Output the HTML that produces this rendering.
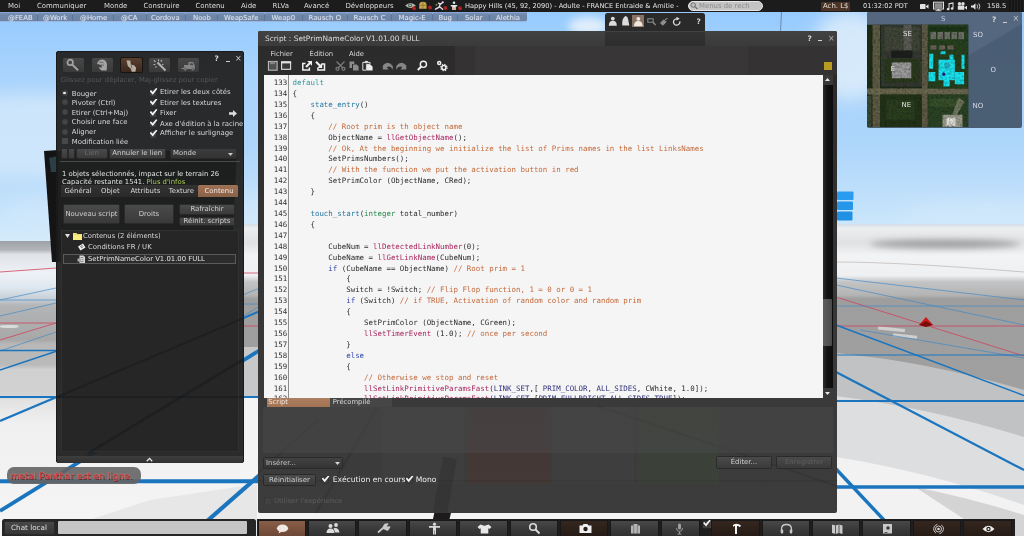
<!DOCTYPE html>
<html lang="fr">
<head>
<meta charset="utf-8">
<title>Script : SetPrimNameColor V1.01.00 FULL</title>
<style>
html,body{margin:0;padding:0;}
body{width:1024px;height:536px;overflow:hidden;position:relative;background:#c9dff5;
 font-family:"DejaVu Sans","Liberation Sans",sans-serif;font-size:6.9px;color:#d8d8d8;line-height:1;}
.abs{position:absolute;}
#world{position:absolute;left:0;top:0;width:1024px;height:536px;}
.t{position:absolute;white-space:nowrap;line-height:10px;height:10px;margin-top:-5px;}
/* top menu */
#menubar{position:absolute;left:0;top:0;width:1024px;height:12px;background:#1c1c1c;}
#menubar .t{color:#dcdcdc;font-size:6.95px;top:6px;}
#favbar{position:absolute;left:0;top:12px;width:526.500px;height:10px;background:linear-gradient(#7890b6,#6e86a8 30%,#6c84a6);border-top:0.800px solid #86a6d8;border-bottom:1px solid #9cb6de;box-sizing:border-box;border-radius:0 0 2px 0;}
#favbar .t{color:#d4dce8;font-size:6.9px;top:5px;text-shadow:0 0 1px #fff8;}
#favbar i{position:absolute;top:0.500px;width:1px;height:7.500px;background:#5e7494;box-shadow:0 -0.700px 0 #a8c0e4;}
/* generic floater */
.floater{position:absolute;background:rgba(36,36,36,0.95);border-radius:2px;box-sizing:border-box;}
.btn{position:absolute;box-sizing:border-box;background:linear-gradient(#4a4a4a,#3a3a3a);border:1px solid #2a2a2a;border-radius:1.5px;color:#d0d0d0;text-align:center;white-space:nowrap;}
.btn.dis{color:#6a6a6a;}

.tb{position:absolute;top:58px;width:21px;height:14px;background:linear-gradient(#484848,#3a3a3a);border-radius:1.5px;box-shadow:0 0 0 0.5px #2a2a2a;}
.tb.act{background:linear-gradient(#5a4030,#3a281e);box-shadow:0 0 0 1px #1a1410;}
.tb svg{position:absolute;left:0;top:0;}
.rad{position:absolute;width:6px;height:6px;border-radius:50%;background:radial-gradient(#4a4a4a,#383838);box-shadow:0 0 0 0.5px #2c2c2c;}
.rad.on::after{content:"";position:absolute;left:1.8px;top:1.8px;width:2.4px;height:2.4px;border-radius:50%;background:#f0f0f0;}
.cb{position:absolute;width:6px;height:6px;background:#484848;box-shadow:0 0 0 0.5px #2c2c2c;}
.ck{position:absolute;width:8px;height:8px;}
.ck::before{content:"";position:absolute;left:0.2px;top:1.6px;width:6.4px;height:6.4px;background:#3c3c3c;box-shadow:0 0 0 0.5px #2a2a2a;}
.ck::after{content:"";position:absolute;left:0;top:0;width:8px;height:7px;background:#f6f6f6;clip-path:polygon(3% 46%,19% 30%,38% 58%,82% 0%,99% 9%,41% 96%);}

#code{font-family:"DejaVu Sans Mono","Liberation Mono",monospace;font-size:7.435px;color:#2c2c2c;}
#code .ln{height:10.91px;line-height:10.91px;white-space:pre;position:relative;}
#code .ln b{position:absolute;left:0;width:23.2px;text-align:right;font-weight:normal;color:#303030;}
#code .ln .cd{position:absolute;left:28.6px;}

.bb{position:absolute;top:520px;height:16px;box-sizing:border-box;background:linear-gradient(#484848,#383838 60%,#303030);border:1px solid #181818;border-bottom:none;border-radius:1.5px 1.5px 0 0;overflow:hidden;}
.bb.act{background:linear-gradient(#8a5e48,#6e4836);}
.bb.dk{background:linear-gradient(#35271f,#261b16);}
#wrap{position:absolute;left:0;top:0;width:1024px;height:536px;overflow:hidden;filter:blur(0.35px);}
</style>
</head>
<body>
<div id="wrap">
<svg id="world" width="1024" height="536" viewBox="0 0 1024 536">
 <defs>
  <linearGradient id="sky" gradientUnits="userSpaceOnUse" x1="0" y1="0" x2="0" y2="245">
   <stop offset="0" stop-color="#94c8fe"/>
   <stop offset="0.12" stop-color="#9bcdfe"/>
   <stop offset="0.3" stop-color="#a8d3fc"/>
   <stop offset="0.6" stop-color="#aed6fb"/>
   <stop offset="0.85" stop-color="#c4e2fb"/>
   <stop offset="1" stop-color="#d6ecfb"/>
  </linearGradient>
  <linearGradient id="gndL" gradientUnits="userSpaceOnUse" x1="0" y1="241" x2="0" y2="536">
   <stop offset="0" stop-color="#9ea2a8"/>
   <stop offset="0.03" stop-color="#b2b4b8"/>
   <stop offset="0.045" stop-color="#dfe2e6"/>
   <stop offset="0.11" stop-color="#eef2f6"/>
   <stop offset="0.16" stop-color="#dde6ee"/>
   <stop offset="0.20" stop-color="#c4ccd4"/>
   <stop offset="0.22" stop-color="#b2b4b6"/>
   <stop offset="0.335" stop-color="#a8a8a8"/>
   <stop offset="0.35" stop-color="#b8b8b8"/>
   <stop offset="0.42" stop-color="#bababa"/>
   <stop offset="0.435" stop-color="#d0d0d0"/>
   <stop offset="0.52" stop-color="#d2d2d2"/>
   <stop offset="0.54" stop-color="#e2e2e2"/>
   <stop offset="0.62" stop-color="#f0f0f0"/>
   <stop offset="1" stop-color="#f5f5f5"/>
  </linearGradient>
  <linearGradient id="gndR" gradientUnits="userSpaceOnUse" x1="0" y1="224" x2="0" y2="536">
   <stop offset="0" stop-color="#d4dee8"/>
   <stop offset="0.013" stop-color="#eceef0"/>
   <stop offset="0.06" stop-color="#e0e1e2"/>
   <stop offset="0.10" stop-color="#f2f3f4"/>
   <stop offset="0.165" stop-color="#eef0f2"/>
   <stop offset="0.186" stop-color="#c2c3c4"/>
   <stop offset="0.228" stop-color="#b4b4b4"/>
   <stop offset="0.24" stop-color="#9e9e9e"/>
   <stop offset="1" stop-color="#a2a2a2"/>
  </linearGradient>
  <filter id="b1b" x="-20%" y="-200%" width="140%" height="500%"><feGaussianBlur stdDeviation="3"/></filter><filter id="b0"><feGaussianBlur stdDeviation="0.500"/></filter><filter id="b2" x="-50%" y="-100%" width="200%" height="300%"><feGaussianBlur stdDeviation="4"/></filter><filter id="b1"><feGaussianBlur stdDeviation="1.2"/></filter>
  <filter id="b3" x="-50%" y="-50%" width="200%" height="200%"><feGaussianBlur stdDeviation="9"/></filter>
 </defs>
 <!-- sky -->
 <rect x="0" y="0" width="1024" height="245" fill="url(#sky)"/>
 <ellipse cx="40" cy="135" rx="150" ry="42" fill="#d6eafb" opacity="0.8" filter="url(#b3)"/>
 <ellipse cx="150" cy="215" rx="150" ry="25" fill="#d6eafb" opacity="0.5" filter="url(#b3)"/>
 <ellipse cx="850" cy="55" rx="40" ry="45" fill="#dcecfa" opacity="0.9" filter="url(#b3)"/>
 <ellipse cx="990" cy="215" rx="90" ry="14" fill="#d6eafb" opacity="0.6" filter="url(#b3)"/>
 <ellipse cx="588" cy="26" rx="20" ry="9" fill="#e4f0fb" opacity="0.95" filter="url(#b2)"/>
 <line x1="781.500" y1="12" x2="780.500" y2="32" stroke="#5a6a84" stroke-width="0.700"/>
 <!-- ground left / centre -->
 <rect x="0" y="241" width="240" height="295" fill="url(#gndL)"/>
 <!-- ground right -->
 <rect x="240" y="224" width="784" height="312" fill="url(#gndR)"/>
 <rect x="240" y="347" width="596" height="189" fill="#c6c8ca"/>
 <rect x="240" y="398" width="596" height="138" fill="#f4f4f4"/>
 <polygon points="436,505 453,505 449.500,519 433,519" fill="#1c1a1a"/>
 <ellipse cx="945" cy="244" rx="75" ry="4.500" fill="#8a8a8c" opacity="0.75" filter="url(#b1b)"/>
 <path d="M836 262Q900 262 1024 272" stroke="#8a7a70" stroke-width="0.600" fill="none" opacity="0.6"/>
 <g fill="#f0f0f0" opacity="0.6" filter="url(#b0)"><rect x="878" y="327.500" width="27" height="3.200" transform="rotate(6 890 329)"/><rect x="893" y="334.500" width="24" height="3" transform="rotate(6 905 336)"/></g>
 <!-- grey diagonal shading bottom right -->
 <path d="M836 353Q930 362 1024 390V536H836z" fill="#c1c2c3"/>
 <path d="M836 396Q930 408 1024 437V536H836z" fill="#dddedf"/>
 <path d="M836 457Q930 472 1024 505V536H836z" fill="#f2f2f2"/>
 <path d="M915 487Q970 498 1024 515V536H990z" fill="#d4d4d4"/>
 <polygon points="40,536 150,500 257,484 257,536" fill="#e4e4e4" opacity="0.8"/>
 <!-- blue prims right of script window -->
 <g>
  <rect x="837" y="191.500" width="16.500" height="8.500" rx="1" fill="#2a9cf0"/>
  <rect x="837" y="201.500" width="16" height="8.500" rx="1" fill="#2596ea"/>
  <rect x="837" y="211.500" width="15.500" height="9" rx="1" fill="#2090e4"/>
 </g>
 <ellipse cx="9" cy="326.500" rx="10" ry="1.600" fill="#f0f0f0" opacity="0.7" filter="url(#b0)"/>
 <!-- red grid lines -->
 <g stroke="#d0405a" stroke-width="0.9" fill="none" opacity="0.85">
  <line x1="836" y1="326" x2="1024" y2="326"/>
  <line x1="836" y1="297" x2="1024" y2="356"/>
  <line x1="0" y1="323" x2="56" y2="323"/>
  <line x1="240" y1="273" x2="260" y2="273"/>
  <line x1="240" y1="326" x2="260" y2="326"/>
  <line x1="0" y1="340" x2="56" y2="323"/>
  <line x1="0" y1="272" x2="56" y2="268"/>
 </g>
 <!-- thin blue grid lines -->
 <g stroke="#3a86c8" stroke-width="0.8" fill="none" opacity="0.8">
  <line x1="836" y1="285" x2="1024" y2="325"/>
  <line x1="836" y1="306" x2="1024" y2="306"/>
  <line x1="836" y1="278" x2="1024" y2="300"/>
  <line x1="860" y1="330" x2="1024" y2="358"/>
  <line x1="0" y1="300" x2="56" y2="288"/>
  <line x1="0" y1="316" x2="56" y2="303"/>
  <line x1="0" y1="300" x2="56" y2="300"/>
  <line x1="0" y1="351" x2="56" y2="332"/>
  <line x1="240" y1="296" x2="260" y2="288"/>
  <line x1="240" y1="318" x2="260" y2="306"/>
  <line x1="240" y1="304" x2="260" y2="304"/>
 </g>
 <!-- thick blue grid lines -->
 <g stroke="#1b75be" fill="none" stroke-linecap="butt">
  <line x1="0" y1="397" x2="836" y2="397" stroke-width="2"/>
  <line x1="836" y1="401" x2="1024" y2="401" stroke-width="2"/>
  <line x1="0" y1="481.300" x2="836" y2="481.300" stroke-width="4"/>
  <line x1="836" y1="487" x2="1024" y2="487" stroke-width="3.600"/>
  <line x1="260" y1="311" x2="0" y2="421" stroke-width="2.200"/>
  <line x1="260" y1="350" x2="0" y2="511" stroke-width="3.800"/>
  <line x1="262" y1="473" x2="190" y2="536" stroke-width="4.200"/>
  <line x1="836" y1="372" x2="1024" y2="470" stroke-width="2.200"/>
  <line x1="836" y1="469" x2="899" y2="536" stroke-width="3.400"/>
  <line x1="836" y1="325" x2="1024" y2="395.500" stroke-width="1.500"/>
  <line x1="836" y1="355" x2="1024" y2="355" stroke-width="1"/>
  <line x1="0" y1="370" x2="60" y2="350" stroke-width="1.500"/>
  <line x1="0" y1="350.500" x2="60" y2="350.500" stroke-width="1.500"/>
 </g>
 <!-- red marker -->
 <polygon points="919,325 926,317 933,325" fill="#d01818"/>
 <polygon points="919,325 926,321 933,325 926,327" fill="#7a0c0c"/>
 <!-- dark prim behind build floater -->
 <polygon points="44,151 58,150 58,262 52,262" fill="#141414"/>
 <polygon points="49,158 58,156 58,172 51,172" fill="#3a5a66" opacity="0.6"/>
</svg>

<div id="menubar">
 <span class="t" style="left:8px">Moi</span>
 <span class="t" style="left:37px">Communiquer</span>
 <span class="t" style="left:104px">Monde</span>
 <span class="t" style="left:143.500px">Construire</span>
 <span class="t" style="left:195.500px">Contenu</span>
 <span class="t" style="left:241px">Aide</span>
 <span class="t" style="left:272.500px">RLVa</span>
 <span class="t" style="left:304px">Avancé</span>
 <span class="t" style="left:345.500px">Développeurs</span>
 <!-- status icons -->
 <svg class="abs" style="left:404px;top:1px" width="60" height="11" viewBox="0 0 60 11">
  <path d="M1.200 4.500q5.300-5.200 10.600 0q-5.300 5.200-10.600 0z" fill="#b4b4b0"/><circle cx="6" cy="4.300" r="1.900" fill="#4a5a4a"/><circle cx="6" cy="4.300" r="0.800" fill="#e0e0e0"/>
  <circle cx="10" cy="7.300" r="2" fill="#a01c1c"/><path d="M8.800 6.100l2.400 2.400" stroke="#d05050" stroke-width="0.600"/>
  <path d="M15.200 4.200q0-3.400 3.700-3.400t3.700 3.400v3.600h-7.400z" fill="#c8a850"/><path d="M15.200 4.400h7.400M18.900 1v6.800" stroke="#8a6c28" stroke-width="0.700"/>
  <circle cx="26" cy="6.500" r="2" fill="#a01c1c"/><path d="M24.800 5.300l2.400 2.400" stroke="#d05050" stroke-width="0.600"/>
  <path d="M31.500 8.200l3.600-2 1.200-3.400M34.500 2.200l2 1 2-1.800M36 6l2.600 2.200" stroke="#e4dcf0" stroke-width="1.400" fill="none" stroke-linecap="round"/><circle cx="38.800" cy="1.300" r="1" fill="#e4dcf0"/><circle cx="32.500" cy="3.800" r="1" fill="#6a9a40"/>
  <circle cx="41.500" cy="7" r="2" fill="#a01c1c"/><path d="M40.300 5.800l2.400 2.400" stroke="#d05050" stroke-width="0.600"/>
  <circle cx="50" cy="1.800" r="1.300" fill="#dce8f0"/><path d="M46.800 4h6.400v1.500h-1.400v3.500h-3.600V5.500h-1.400z" fill="#e8e4e0"/><path d="M48.200 6.500h3.600v2.500h-3.600z" fill="#d8b0a0"/>
  <circle cx="56" cy="7.300" r="2" fill="#a01c1c"/><path d="M54.800 6.100l2.400 2.400" stroke="#d05050" stroke-width="0.600"/>
 </svg>
 <span class="t" style="left:465px;font-size:6.650px;color:#e6e6e6">Happy Hills (45, 92, 2090) - Adulte - FRANCE Entraide &amp; Amitie -</span>
 <div class="abs" style="left:687.500px;top:1px;width:75px;height:9.500px;border-radius:5px;background:#c4c4c4;box-sizing:border-box;border:0.500px solid #e6e6e6"></div>
 <svg class="abs" style="left:690px;top:2px" width="9" height="8" viewBox="0 0 9 8"><circle cx="3.200" cy="3" r="2.200" fill="none" stroke="#6a6a6a" stroke-width="1"/><path d="M4.800 4.600L7.500 7" stroke="#6a6a6a" stroke-width="1.200"/></svg>
 <span class="t" style="left:699px;color:#8c8c8c;font-size:6.900px">Menus de rech</span>
 <div class="abs" style="left:821px;top:2px;width:29px;height:9px;background:#4a3426"></div>
 <span class="t" style="left:823px;color:#e8e0d8;font-size:6.900px">Ach. L$</span>
 <span class="t" style="left:863px;font-size:6.600px;color:#e0e0e0">01:32:02 PDT</span>
 <svg class="abs" style="left:919px;top:1px" width="64" height="11" viewBox="0 0 64 11">
  <g fill="#e0e0e0">
   <rect x="1" y="3" width="5.500" height="5" rx="0.600"/><path d="M6.500 5.500L9.500 3.200v4.600z"/>
   <rect x="14.500" y="1.200" width="10" height="6.800" fill="none" stroke="#e0e0e0" stroke-width="1"/><rect x="15.500" y="2.200" width="8" height="4.800" fill="#8a8a8a"/><rect x="18.500" y="8" width="2" height="1.500"/><rect x="16.500" y="9.300" width="6" height="0.900"/>
   <path d="M29.500 2.200l5-1v6.300a1.400 1.200 0 1 1-1-1.150v-3.600l-3 .6v4.800a1.400 1.200 0 1 1-1-1.150z"/>
   <circle cx="40.500" cy="2.800" r="1.700"/><circle cx="44" cy="2.800" r="1.700"/><rect x="38.800" y="4.600" width="6.500" height="4.200" rx="0.500"/><path d="M45.300 6.600l2.700-1.800v4z"/>
   <path d="M52 4.500h2l2.500-2.200v6.400L54 6.500h-2z"/>
  </g>
  <path d="M58 3.600q1.200 1.900 0 3.800M59.800 2.400q2 3.100 0 6.200" stroke="#e0e0e0" stroke-width="0.900" fill="none"/>
 </svg>
 <span class="t" style="left:987px;font-size:6.700px;color:#e0e0e0">158.5</span>
 <div class="abs" style="left:1009px;top:0;width:15px;height:12px;background:repeating-linear-gradient(90deg,#161616 0 2px,#222 2px 3px)"></div>
</div>

<div id="favbar">
 <span class="t" style="left:8px">@FEAB</span><i style="left:36.500px"></i>
 <span class="t" style="left:43px">@Work</span><i style="left:72px"></i>
 <span class="t" style="left:80px">@Home</span><i style="left:113px"></i>
 <span class="t" style="left:121px">@CA</span><i style="left:146px"></i>
 <span class="t" style="left:151px">Cordova</span><i style="left:185px"></i>
 <span class="t" style="left:193px">Noob</span><i style="left:216.500px"></i>
 <span class="t" style="left:224px">WeapSafe</span><i style="left:264px"></i>
 <span class="t" style="left:271.500px">Weap0</span><i style="left:301.500px"></i>
 <span class="t" style="left:308.500px">Rausch O</span><i style="left:346.500px"></i>
 <span class="t" style="left:353.500px">Rausch C</span><i style="left:391px"></i>
 <span class="t" style="left:398.500px">Magic-E</span><i style="left:431.500px"></i>
 <span class="t" style="left:438.500px">Bug</span><i style="left:457px"></i>
 <span class="t" style="left:465px">Solar</span><i style="left:488.500px"></i>
 <span class="t" style="left:496px">Alethia</span>
</div>

<div class="abs" style="left:866.500px;top:12.300px;width:155px;height:115.500px;background:rgba(70,88,110,0.96);border-radius:2px;overflow:hidden">
 <svg class="abs" style="left:0;top:0" width="156" height="115" viewBox="0 0 156 115">
  <defs><filter id="mb" x="0" y="0" width="100%" height="100%"><feGaussianBlur stdDeviation="0.700" result="b"/><feTurbulence type="fractalNoise" baseFrequency="0.45" numOctaves="2" seed="4" result="n"/><feColorMatrix in="n" type="matrix" values="0 0 0 0 0  0 0 0 0 0  0 0 0 0 0  0.9 0.9 0 0 -0.72" result="na"/><feFlood flood-color="#0a1408"/><feComposite operator="in" in2="na" result="dark"/><feComposite in="dark" in2="b" operator="atop"/></filter></defs>
  <!-- frustum wedge -->
  <polygon points="0,0 156,0 156,11.300 101.200,43.700 101.200,13 0,13" fill="#54677f"/>
  
  <g filter="url(#mb)" transform="translate(-866.500,-12.300)">
   <rect x="866" y="25" width="101.700" height="103" fill="#1c2a14"/>
   <!-- roads -->
   <rect x="872" y="25" width="7.500" height="103" fill="#5e5c44"/>
   <rect x="921.500" y="25" width="5.800" height="103" fill="#5e5c46"/>
   <rect x="866" y="88.700" width="101.700" height="6.200" fill="#6a6850"/>
   <!-- SE block -->
   <rect x="880.500" y="25" width="41" height="62" fill="#343830"/>
   <rect x="884" y="27" width="35" height="24" fill="#414438"/>
   <rect x="903" y="25" width="8" height="26" fill="#5a5a54"/>
   <rect x="890.700" y="50.800" width="21.300" height="7.400" fill="#1c1e1c"/>
   <rect x="884" y="59" width="35" height="24" fill="#2a381e"/>
   <rect x="891.300" y="62.700" width="19.500" height="15.800" fill="#9a9a9a"/>
   <!-- SO block -->
   <rect x="927.700" y="25" width="40" height="63.700" fill="#27401f"/>
   <rect x="929" y="27" width="37" height="4" fill="#1e3016"/>
   <g fill="#6e7068"><rect x="930" y="32.300" width="5.500" height="7.200"/><rect x="937" y="32.300" width="5.500" height="7.200"/><rect x="944" y="32.300" width="5.500" height="7.200"/><rect x="951" y="32.300" width="5.500" height="7.200"/><rect x="958" y="32.300" width="5.500" height="7.200"/></g>
   <g fill="#6a625a"><rect x="930" y="45.600" width="6" height="4.200"/><rect x="938.500" y="45.600" width="6" height="4.200"/><rect x="947" y="45.600" width="6" height="4.200"/></g>
   <!-- cyan pool -->
   <g fill="#14e4f0">
    <rect x="938" y="60" width="16.300" height="20.500"/>
    <rect x="954.300" y="72.300" width="9.300" height="12.300"/>
    <rect x="928" y="72.300" width="6.800" height="9.300"/>
    <rect x="928.700" y="54" width="4" height="15"/>
    <rect x="943" y="79.500" width="6.200" height="7.200"/>
    <rect x="961" y="55" width="3" height="14.200"/>
    <rect x="940" y="51.500" width="5" height="3"/>
    <rect x="949" y="55" width="4" height="5"/>
   </g>
   <rect x="944" y="63" width="5" height="6" fill="#2a9ab0" opacity="0.7"/>
   <circle cx="943.300" cy="74.500" r="1.600" fill="#28188a"/>
   <!-- NE / NO blocks -->
   <rect x="879.500" y="94.900" width="42" height="33" fill="#223218"/>
   <rect x="886" y="100" width="28" height="20" fill="#2a3c1e"/>
   <rect x="927.300" y="94.900" width="40.400" height="33" fill="#2c4224"/>
   <rect x="930" y="99" width="30" height="8" fill="#38502c"/>
   <path d="M958 98l6 4-8 14-4-2z" fill="#8a8a78" opacity="0.7"/>
   <rect x="942" y="115" width="20" height="13" fill="#9a9a8c"/>
   <rect x="946" y="118" width="9" height="8" fill="#e0e0d8"/>
   <rect x="866" y="96" width="5" height="32" fill="#3a4a34"/>
  </g>
 </svg>
 <span class="t" style="left:74.500px;top:7.200px;color:#c4cad6;font-size:7px">S</span>
 <span class="t" style="left:36.500px;top:21.500px;color:#e0e0e0;font-size:7px">SE</span>
 <span class="t" style="left:106.500px;top:22.500px;color:#d4dae6;font-size:7px">SO</span>
 <span class="t" style="left:24px;top:57px;color:#e0e0e0;font-size:7px">E</span>
 <span class="t" style="left:124px;top:57.500px;color:#d4dae6;font-size:7px">O</span>
 <span class="t" style="left:35px;top:93px;color:#e0e0e0;font-size:7px">NE</span>
 <span class="t" style="left:106px;top:93.300px;color:#d4dae6;font-size:7px">NO</span>
 <span class="t" style="left:125.500px;top:7.500px;color:#d8d8d8;font-weight:bold;font-size:7.500px">?</span>
 <div class="abs" style="left:136.500px;top:9.500px;width:4px;height:1.200px;background:#d0d0d0"></div>
 <span class="t" style="left:146px;top:7px;color:#c0c4cc;font-size:8px">×</span>
</div>

<div class="abs" style="left:604.800px;top:13.200px;width:100px;height:19px;background:#2a2a2a;border-radius:2.500px 2.500px 0 0">
 <div class="abs" style="left:27.400px;top:1.600px;width:11.800px;height:11.800px;background:#8a7262"></div>
 <svg class="abs" style="left:0;top:0.800px" width="100" height="16" viewBox="0 0 100 16">
  <g fill="#dcdcdc">
   <circle cx="7.800" cy="4.600" r="1.900"/><path d="M3.800 11.800q0-5 4-5t4 5z"/>
   <path d="M20.700 2q2 .3 2.400 3l1.200 6.500h-7q-.5-6 1.600-8q.8-1.400 1.800-1.500z"/>
   <circle cx="33.300" cy="4.800" r="1.900" fill="#f0e6de"/><path d="M29 12.300q0-5.300 4.300-5.300t4.300 5.300z" fill="#f0e6de"/>
  </g>
  <g fill="none" stroke="#8e8e8e" stroke-width="1">
   <rect x="42.800" y="4.800" width="5.400" height="3.400"/><path d="M48 8.200l2.600 2.800" stroke-width="1.300"/>
   <path d="M55.500 9.200l3-3.300 2.600 1.800-3 3.500z" fill="#8e8e8e"/><path d="M60 5.500l2.500-1" stroke-width="1.200"/>
  </g>
  <path d="M72.800 5a3.200 3.200 0 1 0 2 2.300" fill="none" stroke="#dcdcdc" stroke-width="1.300"/><path d="M71.500 2.800l3.200 2-3.200 1.800z" fill="#dcdcdc"/>
 </svg>
 <span class="t" style="left:91.800px;top:8.700px;color:#d0d0d0;font-weight:bold;font-size:7.500px">?</span>
</div>

<div class="floater" id="build" style="left:56px;top:51px;width:188px;height:412px;background:rgba(34,34,34,0.96);border:1px solid #1a1a1a;">
</div>
<div class="abs" style="left:57px;top:151px;width:180px;height:111px;background:rgba(0,0,0,0.26);clip-path:polygon(0 0,100% 0,97% 100%,0 100%)"></div>
<div id="buildc" class="abs" style="left:0;top:0;width:0;height:0">
 <!-- tool buttons -->
 <div class="tb" style="left:63px"><svg width="21" height="14" viewBox="0 0 21 14"><circle cx="7.200" cy="4.400" r="2.700" fill="none" stroke="#a2a2a2" stroke-width="1.700"/><path d="M9.300 6.600L15 12.300" stroke="#a2a2a2" stroke-width="2"/></svg></div>
 <div class="tb" style="left:92px"><svg width="21" height="14" viewBox="0 0 21 14"><path d="M5 6q1-4.500 5.500-4.500q4 .5 4.500 5l-.3 6H9.500l-3-3q2-.5 3 .5l.3-2.500q-2-1.500-4.800-1.500z" fill="#a4a4a4"/><path d="M7.500 4.500q2-1 4 .5M9 7q1.500-.5 3 .5" stroke="#4a4a4a" stroke-width="0.700" fill="none"/></svg></div>
 <div class="tb act" style="left:120.500px"><svg width="21" height="14" viewBox="0 0 21 14"><path d="M5.500 2.500h3.800l.5 4 3.200.8 2.200 2.500-.8 4h-3.600l-1.200-3.200-2.800-2.600z" fill="#b8aea4"/><path d="M10 6.500l1 4" stroke="#5a4030" stroke-width="0.600"/></svg></div>
 <div class="tb" style="left:149px"><svg width="21" height="14" viewBox="0 0 21 14"><path d="M8.500 4.500L16.500 12.500" stroke="#b4b4b4" stroke-width="1.900"/><path d="M5 2.500l1.500 1.200M9.500 1.500v1.800M13 2.200l-1.300 1.300M4.500 6.500h1.800M13 6.500l1.500-.3M6.500 9.500l1-1" stroke="#b8b8b8" stroke-width="1.100"/></svg></div>
 <div class="tb" style="left:178px"><svg width="21" height="14" viewBox="0 0 21 14"><path d="M3 10.500l3-1V7h4.500V4h4.500l1.800 3.500V11H3z" fill="#868686"/><circle cx="7.200" cy="11" r="1.700" fill="#6e6e6e"/><circle cx="14.800" cy="11" r="1.700" fill="#6e6e6e"/><path d="M12 5.200h2.500l1 2H12z" fill="#4a4a4a"/></svg></div>
 <span class="t" style="left:214.500px;top:59px;color:#d8d8d8;font-weight:bold;font-size:7.500px">?</span>
 <div class="abs" style="left:225.500px;top:61px;width:4px;height:1.200px;background:#d0d0d0"></div>
 <span class="t" style="left:235px;top:58.500px;color:#d0d0d0;font-size:8px">×</span>
 <span class="t" style="left:60.750px;top:79.500px;color:#565656;font-size:6.850px">Glissez pour déplacer, Maj-glissez pour copier</span>
 <!-- radios -->
 <i class="rad on" style="left:61.500px;top:90px"></i><span class="t" style="left:71.750px;top:93.500px">Bouger</span>
 <i class="rad" style="left:61.500px;top:99.300px"></i><span class="t" style="left:71.750px;top:103.100px">Pivoter (Ctrl)</span>
 <i class="rad" style="left:61.500px;top:109.200px"></i><span class="t" style="left:71.750px;top:112.700px">Etirer (Ctrl+Maj)</span>
 <i class="rad" style="left:61.500px;top:118.800px"></i><span class="t" style="left:71.750px;top:122.100px">Choisir une face</span>
 <i class="rad" style="left:61.500px;top:128.500px"></i><span class="t" style="left:71.750px;top:131.500px">Aligner</span>
 <i class="cb" style="left:61.500px;top:138px"></i><span class="t" style="left:71.750px;top:141.500px">Modification liée</span>
 <!-- checks -->
 <b class="ck" style="left:149.500px;top:88px"></b><span class="t" style="left:160px;top:91.800px">Etirer les deux côtés</span>
 <b class="ck" style="left:149.500px;top:98.500px"></b><span class="t" style="left:160px;top:103px">Etirer les textures</span>
 <b class="ck" style="left:149.500px;top:109px"></b><span class="t" style="left:160px;top:113px">Fixer</span>
 <b class="ck" style="left:149.500px;top:119.300px"></b><span class="t" style="left:160px;top:123.500px;width:84px;overflow:hidden">Axe d'édition à la racine</span>
 <b class="ck" style="left:149.500px;top:129.800px"></b><span class="t" style="left:160px;top:133.300px">Afficher le surlignage</span>
 <svg class="abs" style="left:229px;top:109.500px" width="8" height="7" viewBox="0 0 8 7"><path d="M0 2.300h4V0l4 3.500L4 7V4.700H0z" fill="#dcdcdc"/></svg>
 <!-- link row -->
 <div class="btn dis" style="left:61px;top:148px;width:6.500px;height:11px"></div>
 <div class="btn dis" style="left:68px;top:148px;width:6.500px;height:11px"></div>
 <div class="btn dis" style="left:75.750px;top:148px;width:32px;height:11px;line-height:9px">Lien</div>
 <div class="btn" style="left:109px;top:148px;width:56.500px;height:11px;line-height:9px">Annuler le lien</div>
 <div class="btn" style="left:170px;top:148px;width:67px;height:11px;line-height:9px;text-align:left;padding-left:2px;background:linear-gradient(#3c3c3c,#323232)">Monde</div>
 <svg class="abs" style="left:228px;top:152.500px" width="5" height="3" viewBox="0 0 5 3"><path d="M0 0h5L2.500 3z" fill="#c8c8c8"/></svg>
 <div class="abs" style="left:60px;top:161px;width:180px;height:1px;background:#4a4a4a"></div>
 <span class="t" style="left:62px;top:173.900px;color:#e2e2e2;font-size:6.830px">1 objets sélectionnés, impact sur le terrain 26</span>
 <span class="t" style="left:62px;top:181.500px;color:#e2e2e2;font-size:6.830px">Capacité restante 1541. <u style="color:#a8c850">Plus d'infos</u></span>
 <!-- tabs -->
 <div class="abs" style="left:61px;top:185px;width:137px;height:12px;background:linear-gradient(#323232,#2a2a2a)"></div>
 <div class="abs" style="left:198px;top:185px;width:40px;height:12px;background:linear-gradient(#a07256,#8a6048);border-radius:1.500px 1.500px 0 0"></div>
 <span class="t" style="left:64.500px;top:191px">Général</span>
 <span class="t" style="left:101px;top:191px">Objet</span>
 <span class="t" style="left:130.500px;top:191px">Attributs</span>
 <span class="t" style="left:168.750px;top:191px">Texture</span>
 <span class="t" style="left:204.500px;top:191px;color:#f0e8e0">Contenu</span>
 <!-- buttons -->
 <div class="btn" style="left:63px;top:204px;width:57px;height:19.500px;line-height:19.500px">Nouveau script</div>
 <div class="btn" style="left:124px;top:204px;width:50px;height:19.500px;line-height:19.500px">Droits</div>
 <div class="btn" style="left:178.750px;top:204px;width:56.500px;height:11px;line-height:9px">Rafraîchir</div>
 <div class="btn" style="left:178.750px;top:216.500px;width:56.500px;height:9px;line-height:7.500px">Réinit. scripts</div>
 <!-- inventory list -->
 <div class="abs" style="left:61px;top:229.500px;width:177.500px;height:222px;background:#262626;border:1px solid #303030;box-sizing:border-box"></div>
 <svg class="abs" style="left:64.500px;top:233.500px" width="5" height="4" viewBox="0 0 5 4"><path d="M0 0h5L2.500 4z" fill="#e0e0e0"/></svg>
 <svg class="abs" style="left:72.500px;top:231.500px" width="9" height="8" viewBox="0 0 9 8"><path d="M0 1h3.500l1 1H9v6H0z" fill="#f0e070"/><path d="M0 3.200h9V8H0z" fill="#f8ec80"/></svg>
 <span class="t" style="left:83px;top:235.800px;font-size:6.800px">Contenus (2 éléments)</span>
 <svg class="abs" style="left:76.500px;top:243px" width="9" height="8" viewBox="0 0 9 8"><path d="M1 3.500L6 0.500 8.500 4.500 3.500 7.500z" fill="#f4f4f4"/><path d="M3.200 3.800l2.300-1.400M4 5l2.300-1.400" stroke="#333" stroke-width="0.700"/></svg>
 <span class="t" style="left:88px;top:247.300px">Conditions FR / UK</span>
 <div class="abs" style="left:63px;top:253.500px;width:172.500px;height:10.500px;border:1px solid #5a5a5a;box-sizing:border-box;background:#2c2c2c"></div>
 <svg class="abs" style="left:77px;top:254.500px" width="9" height="9" viewBox="0 0 9 9"><path d="M2.500 0.500h4l1.500 1.500v6h-5.500z" fill="#d8d8d8"/><path d="M0.500 3.500h3.500v3H0.500z" fill="#b0b0b0"/><path d="M3.500 2.500h3M4.500 4.500h2M3.500 6.500h3" stroke="#555" stroke-width="0.600"/></svg>
 <span class="t" style="left:88px;top:258.500px;font-size:6.880px;color:#e4e4e4">SetPrimNameColor V1.01.00 FULL</span>
 <!-- bottom chevron bar -->
 <div class="abs" style="left:57px;top:456px;width:186px;height:6.500px;background:linear-gradient(#3e3e3e,#303030)"></div>
 <svg class="abs" style="left:146px;top:457px" width="7" height="5" viewBox="0 0 7 5"><path d="M0.800 4.200L3.500 1.400 6.200 4.200" fill="none" stroke="#e8e8e8" stroke-width="1.300"/></svg>
</div>
<svg class="abs" style="left:57px;top:300px" width="186" height="160" viewBox="57 300 186 160"><g stroke="#0c1218" stroke-opacity="0.34" fill="none" stroke-width="2"><path d="M243 318.500L57 397"/><path d="M243 359.500L88.500 453" stroke-width="2.600"/><path d="M57 397H243" stroke-opacity="0.3"/></g></svg>


<div class="floater" id="script" style="left:257.500px;top:31px;width:579px;height:481.500px;background:linear-gradient(#2c2b2b 0,#2d2c2c 50px,#3a3a3a 370px,#3c3c3c 100%);"></div>
<div class="abs" style="left:455px;top:45.500px;width:381.500px;height:29px;background:#343232"></div>
<div class="abs" style="left:382px;top:407px;width:82px;height:77px;background:rgba(255,255,255,0.018)"></div>
<div class="abs" style="left:467px;top:407px;width:82px;height:77px;background:rgba(120,40,20,0.130)"></div>
<div class="abs" style="left:552px;top:407px;width:82px;height:77px;background:rgba(255,255,255,0.020)"></div>
<div class="abs" style="left:637px;top:407px;width:82px;height:77px;background:rgba(60,110,40,0.110)"></div>
<svg class="abs" style="left:257.500px;top:398px" width="579" height="115" viewBox="0 0 579 115"><g stroke="#202020" stroke-opacity="0.2" fill="none"><path d="M120 8L58 115" stroke-width="2.500"/><path d="M192 60L182 115" stroke-width="14" stroke-opacity="0.25"/><path d="M340 8L579 88" stroke-width="1.500"/><path d="M0 75L60 22" stroke-width="2"/><path d="M0 83h579" stroke-width="2" stroke-opacity="0.120"/></g></svg>
<div class="abs" id="scripttitle" style="left:257.500px;top:31px;width:579px;height:15px;background:linear-gradient(#424242,#3a3a3a);border-radius:2px 2px 0 0"></div>
<div class="abs" style="left:604.500px;top:31.500px;width:100px;height:14px;background:rgba(0,0,0,0.22)"></div>
<div class="abs" style="left:475px;top:46px;width:273px;height:28.500px;background:rgba(255,255,255,0.025)"></div>
<span class="t" style="left:265px;top:38.800px;font-size:7.420px;color:#dcdcdc">Script : SetPrimNameColor V1.01.00 FULL</span>
<span class="t" style="left:807.500px;top:38.500px;color:#d8d8d8;font-weight:bold;font-size:7.500px">?</span>
<div class="abs" style="left:817.800px;top:39.600px;width:4.400px;height:1.300px;background:#d0d0d0"></div>
<span class="t" style="left:828px;top:38.600px;color:#b8b8b8;font-size:8px">×</span>
<span class="t" style="left:270.600px;top:53.500px;font-size:6.800px;color:#d8d8d8">Fichier</span>
<span class="t" style="left:309.600px;top:53.500px;font-size:6.800px;color:#d8d8d8">Édition</span>
<span class="t" style="left:349px;top:53.500px;font-size:6.800px;color:#d8d8d8">Aide</span>
<svg class="abs" style="left:266px;top:60px" width="186" height="13" viewBox="0 0 186 13">
 <!-- save -->
 <rect x="2.400" y="1.400" width="8.700" height="8.800" fill="#505050" stroke="#c4c4c4" stroke-width="1"/><rect x="4.300" y="1.400" width="4.400" height="2.700" fill="#9a9a9a"/><path d="M6 1.800v2M7.400 1.800v2" stroke="#4a4a4a" stroke-width="0.500"/>
 <!-- window -->
 <rect x="15.600" y="1.900" width="9" height="7.400" fill="#3a3a3a" stroke="#e0e0e0" stroke-width="1.100"/><path d="M15.100 2.400h10" stroke="#e0e0e0" stroke-width="2"/>
 <!-- export -->
 <g stroke="#f0f0f0" fill="none">
  <path d="M39.500 3.500H36.800v6.400h6.600V7.500" stroke-width="1.500"/><path d="M40 7L44 3" stroke-width="2.200"/><path d="M41.200 1h4.800v4.800z" fill="#f0f0f0" stroke="none"/>
  <path d="M55.500 4h3v6h-6.600V7.800" stroke-width="1.500"/><path d="M50 1.800L54 5.800" stroke-width="2.200"/><path d="M56.200 3v5h-5z" fill="#f0f0f0" stroke="none"/>
 </g>
 <!-- cut (dim) -->
 <g stroke="#7a7a7a" fill="none" stroke-width="1.300">
  <path d="M70.500 1.500L77 8M78.500 1.500L72 8"/><circle cx="71.500" cy="8.800" r="1.500"/><circle cx="77.500" cy="8.800" r="1.500"/>
 </g>
 <!-- copy (dim) -->
 <g fill="#8c8c8c"><path d="M83.500 1.500h4.800v2.500h-2.300v4h-2.500z"/><path d="M87 4.500h3.600l2 2v4h-5.600z"/></g>
 <!-- paste -->
 <g><path d="M96.800 2.400h2.400v-1h2.400v1h2.400v2h-3.600v5.800h-3.600z" fill="none" stroke="#e0e0e0" stroke-width="1"/><rect x="99.200" y="1.200" width="2.400" height="2" fill="#e0e0e0"/><path d="M101 4.800h3.600l2 2v3.800H101z" fill="#ececec"/></g>
 <!-- undo / redo (dim) -->
 <g fill="#868686">
  <path d="M116.800 5.500q5-5.500 10 0.500v3.800q-2.500-5-6-2.500l1.800 2.200-5.800 0z"/>
  <path d="M140.300 5.500q-5-5.500-10 0.500v3.800q2.500-5 6-2.500l-1.800 2.200 5.800 0z"/>
 </g>
 <!-- search -->
 <circle cx="157.400" cy="4.300" r="3.100" fill="none" stroke="#f0f0f0" stroke-width="1.400"/><path d="M155.300 6.500L151.800 10" stroke="#f0f0f0" stroke-width="1.900"/>
 <!-- gears -->
 <circle cx="173.200" cy="2.900" r="1.500" fill="none" stroke="#f0f0f0" stroke-width="1.500"/>
 <circle cx="177.900" cy="7.600" r="2.100" fill="none" stroke="#f0f0f0" stroke-width="1.500"/>
 <circle cx="177.900" cy="7.600" r="3.200" fill="none" stroke="#f0f0f0" stroke-width="1.100" stroke-dasharray="1.300 1.210"/>
</svg>

<div class="abs" style="left:823.500px;top:61.600px;width:8.500px;height:8.500px;background:#b89c22"></div>
<div id="editor" class="abs" style="left:264px;top:74.500px;width:558.600px;height:323.500px;background:#f5f5f5;overflow:hidden">
 <div class="abs" style="left:23.800px;top:0;width:1px;height:324px;background:#8c8c8c"></div>
 <div id="code" style="position:absolute;left:0;top:3.650px"><div class="ln"><b>133</b><span class="cd"><span style="color:#2e9a9e">default</span></span></div><div class="ln"><b>134</b><span class="cd">{</span></div><div class="ln"><b>135</b><span class="cd">    <span style="color:#2878a0">state_entry</span>()</span></div><div class="ln"><b>136</b><span class="cd">    {</span></div><div class="ln"><b>137</b><span class="cd">        <span style="color:#c46a3c">// Root prim is th object name</span></span></div><div class="ln"><b>138</b><span class="cd">        ObjectName = <span style="color:#a82860">llGetObjectName</span>();</span></div><div class="ln"><b>139</b><span class="cd">        <span style="color:#c46a3c">// Ok, At the beginning we initialize the list of Prims names in the list LinksNames</span></span></div><div class="ln"><b>140</b><span class="cd">        SetPrimsNumbers();</span></div><div class="ln"><b>141</b><span class="cd">        <span style="color:#c46a3c">// With the function we put the activation button in red</span></span></div><div class="ln"><b>142</b><span class="cd">        SetPrimColor (ObjectName, CRed);</span></div><div class="ln"><b>143</b><span class="cd">    }</span></div><div class="ln"><b>144</b><span class="cd"></span></div><div class="ln"><b>145</b><span class="cd">    <span style="color:#2878a0">touch_start</span>(<span style="color:#2a8a50">integer</span> total_number)</span></div><div class="ln"><b>146</b><span class="cd">    {</span></div><div class="ln"><b>147</b><span class="cd"></span></div><div class="ln"><b>148</b><span class="cd">        CubeNum = <span style="color:#a82860">llDetectedLinkNumber</span>(0);</span></div><div class="ln"><b>149</b><span class="cd">        CubeName = <span style="color:#a82860">llGetLinkName</span>(CubeNum);</span></div><div class="ln"><b>150</b><span class="cd">        <span style="color:#3446a8">if</span> (CubeName == ObjectName) <span style="color:#c46a3c">// Root prim = 1</span></span></div><div class="ln"><b>151</b><span class="cd">            {</span></div><div class="ln"><b>152</b><span class="cd">            Switch = !Switch; <span style="color:#c46a3c">// Flip Flop function, 1 = 0 or 0 = 1</span></span></div><div class="ln"><b>153</b><span class="cd">            <span style="color:#3446a8">if</span> (Switch) <span style="color:#c46a3c">// if TRUE, Activation of random color and random prim</span></span></div><div class="ln"><b>154</b><span class="cd">            {</span></div><div class="ln"><b>155</b><span class="cd">                SetPrimColor (ObjectName, CGreen);</span></div><div class="ln"><b>156</b><span class="cd">                <span style="color:#a82860">llSetTimerEvent</span> (1.0); <span style="color:#c46a3c">// once per second</span></span></div><div class="ln"><b>157</b><span class="cd">            }</span></div><div class="ln"><b>158</b><span class="cd">            <span style="color:#3446a8">else</span></span></div><div class="ln"><b>159</b><span class="cd">            {</span></div><div class="ln"><b>160</b><span class="cd">                <span style="color:#c46a3c">// Otherwise we stop and reset</span></span></div><div class="ln"><b>161</b><span class="cd">                <span style="color:#a82860">llSetLinkPrimitiveParamsFast</span>(<span style="color:#32327e">LINK_SET</span>,[ <span style="color:#32327e">PRIM_COLOR</span>, <span style="color:#32327e">ALL_SIDES</span>, CWhite, 1.0]);</span></div><div class="ln"><b>162</b><span class="cd">                <span style="color:#a82860">llSetLinkPrimitiveParamsFast</span>(<span style="color:#32327e">LINK_SET</span>,[<span style="color:#32327e">PRIM_FULLBRIGHT</span>,<span style="color:#32327e">ALL_SIDES</span>,<span style="color:#32327e">TRUE</span>]);</span></div></div>
</div>
<!-- scrollbar -->
<div class="abs" style="left:822.600px;top:74.500px;width:10px;height:323.500px;background:linear-gradient(90deg,#2e2e2e,#141414 40%,#0c0c0c)"></div>
<div class="abs" style="left:822.600px;top:74.500px;width:10px;height:10px;background:#3a3a3a"></div>
<svg class="abs" style="left:825.100px;top:78px" width="5" height="3" viewBox="0 0 5 3"><path d="M0 3h5L2.500 0z" fill="#e8e8e8"/></svg>
<div class="abs" style="left:822.600px;top:298.700px;width:9.500px;height:47.500px;background:linear-gradient(90deg,#5e5e5e,#4a4a4a);border-radius:1px"></div>
<div class="abs" style="left:822.600px;top:388px;width:10px;height:10px;background:#3a3a3a"></div>
<svg class="abs" style="left:825.100px;top:391.500px" width="5" height="3" viewBox="0 0 5 3"><path d="M0 0h5L2.500 3z" fill="#e8e8e8"/></svg>
<!-- tabs -->
<div class="abs" style="left:266.500px;top:398px;width:63.500px;height:9px;background:linear-gradient(#ae8062,#a07252)"></div>
<div class="abs" style="left:330px;top:398px;width:62px;height:9px;background:#464646"></div>
<span class="t" style="left:268.300px;top:402.300px;font-size:6.800px;color:#f0e6dc">Script</span>
<span class="t" style="left:332.800px;top:402.300px;font-size:6.800px;color:#dadada">Précompilé</span>
<!-- error box -->
<div class="abs" style="left:263px;top:407px;width:570px;height:45.500px;background:rgba(72,72,72,0.55)"></div>
<!-- lower controls -->
<div class="btn" style="left:263px;top:456.500px;width:80px;height:12px;line-height:10px;text-align:left;padding-left:2px;color:#c4c4c4;background:linear-gradient(#424242,#343434)">Insérer...</div>
<svg class="abs" style="left:334.500px;top:461.500px" width="5" height="3" viewBox="0 0 5 3"><path d="M0 0h5L2.500 3z" fill="#d8d8d8"/></svg>
<div class="btn" style="left:263px;top:474px;width:53px;height:12px;line-height:10px;font-size:7px">Réinitialiser</div>
<b class="ck" style="left:321.500px;top:475.500px"></b><span class="t" style="left:332.800px;top:479.500px;font-size:7.630px;color:#ececec">Exécution en cours</span>
<b class="ck" style="left:405.500px;top:475.500px"></b><span class="t" style="left:415.700px;top:479.500px;font-size:7.630px;color:#ececec">Mono</span>
<i class="cb" style="left:264.500px;top:497.500px;background:#444;opacity:.7"></i><span class="t" style="left:274px;top:500.700px;font-size:6.900px;color:#5e5e5e">Utiliser l'expérience</span>
<div class="btn" style="left:715.700px;top:456px;width:56.500px;height:12.500px;line-height:10.500px">Éditer...</div>
<div class="btn dis" style="left:776px;top:456px;width:56px;height:12.500px;line-height:10.500px;color:#606060">Enregistrer</div>

<div class="abs" style="left:6.500px;top:467.300px;width:134px;height:16.700px;border-radius:7px;background:rgba(100,100,100,0.9)"></div>
<span class="t" style="left:10.500px;top:475.800px;font-size:9.020px;color:#c43434;text-shadow:0 0 1px rgba(240,150,150,0.9),0 0 1.600px rgba(255,200,200,0.5),0.500px 0.600px 0.500px #401010">metal Panthar est en ligne.</span>

<div class="abs" style="left:1.500px;top:519px;width:254px;height:17px;background:#262626;border-radius:2.500px 2.500px 0 0"></div>
<div class="btn" style="left:3.500px;top:520.500px;width:51px;height:14px;line-height:12px;font-size:7.200px;color:#e0e0e0;background:linear-gradient(#484848,#363636)">Chat local</div>
<div class="abs" style="left:57.500px;top:521px;width:189.500px;height:12.500px;background:#c6c6c6;border-radius:1px"></div>

<div class="abs" style="left:256.500px;top:518.500px;width:758px;height:17.500px;background:#1e1e1e"></div>
<div class="bb act" style="left:257.5px;width:48.6px"><svg width="49" height="17" viewBox="0 0 49 17" style="position:absolute;left:-0.2px;top:-1.500px"><ellipse cx="24.500" cy="8.300" rx="5.600" ry="3.700" fill="#f0e8e2"/><path d="M21.500 10.500l-1 3 3.500-2z" fill="#f0e8e2"/></svg></div>
<div class="bb " style="left:307.9px;width:48.6px"><svg width="49" height="17" viewBox="0 0 49 17" style="position:absolute;left:-0.2px;top:-1.500px"><g fill="#dcdcdc"><circle cx="21.500" cy="6" r="2"/><path d="M17.500 13q0-4.500 4-4.500t4 4.500z"/><circle cx="27" cy="5" r="1.900"/><path d="M24.500 8.200q5-1.500 6 4.300h-4.200z"/></g></svg></div>
<div class="bb " style="left:358.3px;width:48.6px"><svg width="49" height="17" viewBox="0 0 49 17" style="position:absolute;left:-0.2px;top:-1.500px"><path d="M19 12.500l5-4.500M24 8l2-3.500 2.500-.5-1.500 2 1 1.500 2.500-.5-2 3z" stroke="#c8c8c8" stroke-width="1.700" fill="#c8c8c8" stroke-linejoin="round"/></svg></div>
<div class="bb " style="left:408.7px;width:48.6px"><svg width="49" height="17" viewBox="0 0 49 17" style="position:absolute;left:-0.2px;top:-1.500px"><g fill="#d8d8d8"><circle cx="24.500" cy="4.200" r="1.600"/><path d="M19 6h11v1.800h-4V14.500h-1.300v-4h-.4v4H23V7.800h-4z"/></g></svg></div>
<div class="bb " style="left:459.1px;width:48.6px"><svg width="49" height="17" viewBox="0 0 49 17" style="position:absolute;left:-0.2px;top:-1.500px"><path d="M20.500 4.500l3 1q1 .6 2 0l3-1 3 2.500-2 2-1.200-.8V13.500h-7.600V8.200L19.500 9l-2-2z" fill="#e8e8e8"/></svg></div>
<div class="bb " style="left:509.5px;width:48.6px"><svg width="49" height="17" viewBox="0 0 49 17" style="position:absolute;left:-0.2px;top:-1.500px"><circle cx="23" cy="7" r="3.300" fill="none" stroke="#dcdcdc" stroke-width="1.600"/><path d="M25.500 9.500l4 4" stroke="#dcdcdc" stroke-width="2"/></svg></div>
<div class="bb dk" style="left:559.9px;width:48.6px"><svg width="49" height="17" viewBox="0 0 49 17" style="position:absolute;left:-0.2px;top:-1.500px"><path d="M18.500 5.500h3l1-1.500h4l1 1.500h3v7.500h-12z" fill="#f0f0f0"/><circle cx="24.500" cy="9" r="2.200" fill="#2a1c16"/></svg></div>
<div class="bb " style="left:610.3px;width:48.6px"><svg width="49" height="17" viewBox="0 0 49 17" style="position:absolute;left:-0.2px;top:-1.500px"><path d="M20 5.500h2.500v-1.500h4v1.500H29v8h-9z" fill="#b4b4b4"/><path d="M22.700 5.500v8M26.300 5.500v8" stroke="#5a5a5a" stroke-width="0.600"/></svg></div>
<div class="bb " style="left:660.7px;width:39.5px"><svg width="49" height="17" viewBox="0 0 49 17" style="position:absolute;left:-4.8px;top:-1.500px"><rect x="21" y="3.500" width="3" height="6" rx="1.500" fill="#a0a0a0"/><path d="M19.500 8q0 3.500 3 3.500t3-3.500M22.500 11.500v2.500M20.500 14h4" stroke="#a0a0a0" stroke-width="0.900" fill="none"/></svg></div>
<div class="bb dk" style="left:711.1px;width:48.6px"><svg width="49" height="17" viewBox="0 0 49 17" style="position:absolute;left:-0.2px;top:-1.500px"><path d="M21 5q4-2.500 8 0.500l-1 1.800q-1.500-1.300-3-1.300v8h-2v-8q-1.500 0-2 1z" fill="#f4f4f4"/></svg></div>
<div class="bb " style="left:761.5px;width:48.6px"><svg width="49" height="17" viewBox="0 0 49 17" style="position:absolute;left:-0.2px;top:-1.500px"><path d="M19.500 12v-3q0-4.500 5-4.500t5 4.500v3" fill="none" stroke="#c8c8c8" stroke-width="1.300"/><rect x="18.800" y="9.500" width="2.400" height="4" rx="0.800" fill="#c8c8c8"/><rect x="27.800" y="9.500" width="2.400" height="4" rx="0.800" fill="#c8c8c8"/></svg></div>
<div class="bb " style="left:811.9px;width:48.6px"><svg width="49" height="17" viewBox="0 0 49 17" style="position:absolute;left:-0.2px;top:-1.500px"><path d="M19 4.500l3.500 1 3.500-1 3.500 1v8.500l-3.500-1-3.500 1-3.500-1z" fill="#c8c8c8"/><path d="M22.500 5.500v8.500M26 4.500v8.500" stroke="#3a3a3a" stroke-width="0.800"/></svg></div>
<div class="bb " style="left:862.3px;width:48.6px"><svg width="49" height="17" viewBox="0 0 49 17" style="position:absolute;left:-0.2px;top:-1.500px"><rect x="20" y="4" width="9" height="9.500" fill="#c8c8c8"/><circle cx="25" cy="8" r="1.800" fill="#3a3a3a"/><path d="M21.500 12.500h3" stroke="#3a3a3a" stroke-width="0.800"/></svg></div>
<div class="bb dk" style="left:912.7px;width:48.6px"><svg width="49" height="17" viewBox="0 0 49 17" style="position:absolute;left:-0.2px;top:-1.500px"><circle cx="24.500" cy="9" r="1.300" fill="#d8d8d8"/><circle cx="24.500" cy="9" r="3" fill="none" stroke="#d8d8d8" stroke-width="0.900"/><circle cx="24.500" cy="9" r="4.800" fill="none" stroke="#d8d8d8" stroke-width="0.800" stroke-dasharray="11 4" transform="rotate(120 24.500 9)"/></svg></div>
<div class="bb dk" style="left:963.1px;width:48.6px"><svg width="49" height="17" viewBox="0 0 49 17" style="position:absolute;left:-0.2px;top:-1.500px"><path d="M18.500 9q6-6.500 12 0q-6 6.500-12 0z" fill="#f0f0f0"/><circle cx="24.500" cy="9" r="2.200" fill="#2a1c16"/><circle cx="24.500" cy="9" r="1" fill="#f0f0f0"/></svg></div>
<div class="abs" style="left:703px;top:520.500px;width:7.500px;height:7.500px;background:#484848"></div><b class="ck" style="left:702.800px;top:519.800px"></b>

</div>
</body>
</html>
